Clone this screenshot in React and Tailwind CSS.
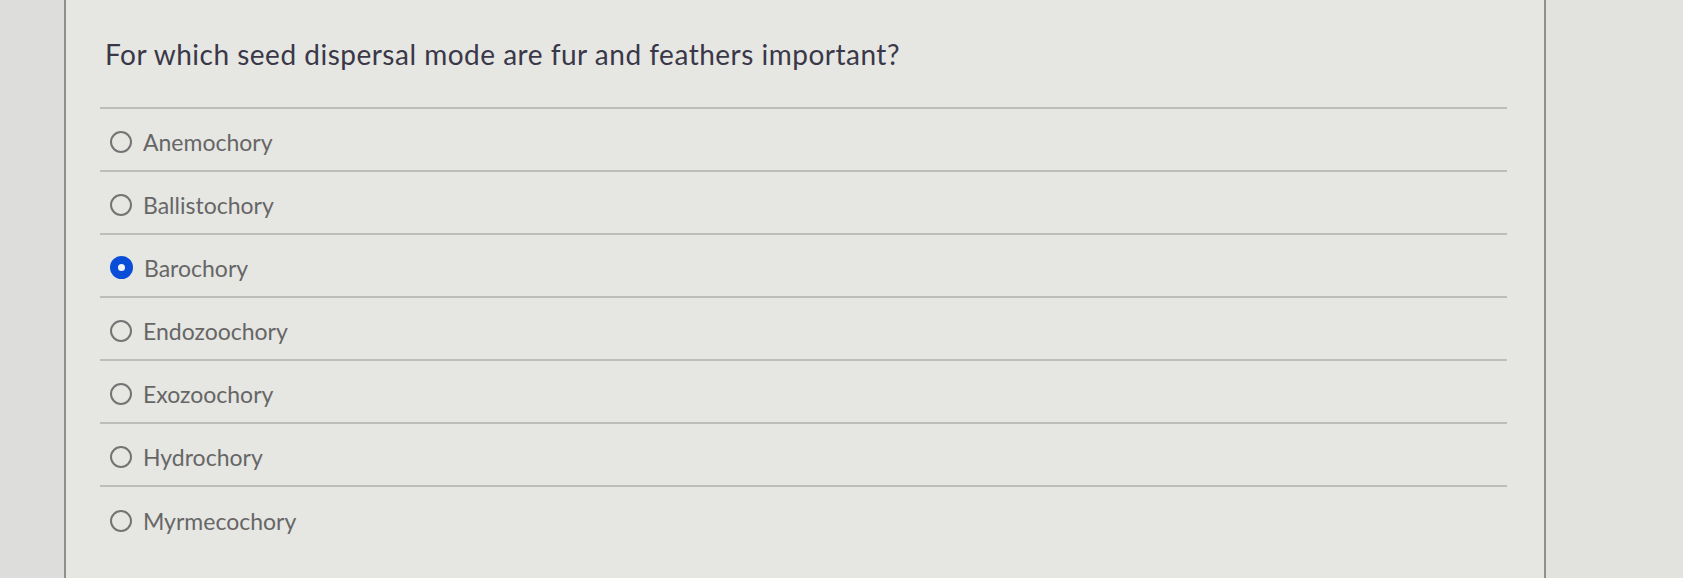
import React from "react";

const options = [
  { label: "Anemochory", selected: false },
  { label: "Ballistochory", selected: false },
  { label: "Barochory", selected: true },
  { label: "Endozoochory", selected: false },
  { label: "Exozoochory", selected: false },
  { label: "Hydrochory", selected: false },
  { label: "Myrmecochory", selected: false },
];

function Radio({ selected }) {
  if (selected) {
    return (
      <span className="block w-[23px] h-[23px] rounded-full border-[8px] border-[#0a4ed8] bg-[#f2f3f5] shrink-0" />
    );
  }
  return (
    <span className="block w-[22px] h-[22px] rounded-full border-2 border-[#747474] bg-transparent shrink-0" />
  );
}

export default function App() {
  return (
    <div
      className="w-full h-[578px] bg-[#dddedb] flex overflow-hidden"
      style={{ fontFamily: "Lato, 'Open Sans', sans-serif" }}
    >
      <div className="w-[64px] shrink-0" />
      <div className="w-[1482px] shrink-0 h-full bg-[#e6e6e3] border-l-2 border-r-2 border-[#8f8f8f] pl-[34px] pr-[37px]">
        <div className="h-[109px] border-b-2 border-[#bdbdbb] pt-[38px] pl-[5px]">
          <h1 className="text-[28px] leading-[32px] tracking-[0.5px] text-[#3a3848] font-normal">
            For which seed dispersal mode are fur and feathers important?
          </h1>
        </div>
        <div className="flex flex-col">
          {options.map((o, i) => (
            <label
              key={o.label}
              className={
                "h-[63px] flex items-center gap-[11px] pl-[10px] pt-[4px] " +
                (i < options.length - 1 ? "border-b-2 border-[#bdbdbb]" : "")
              }
            >
              <Radio selected={o.selected} />
              <span className="text-[23px] leading-[28px] text-[#666666] font-normal">
                {o.label}
              </span>
            </label>
          ))}
        </div>
      </div>
      <div className="flex-1 bg-[#e2e2df]" />
    </div>
  );
}
